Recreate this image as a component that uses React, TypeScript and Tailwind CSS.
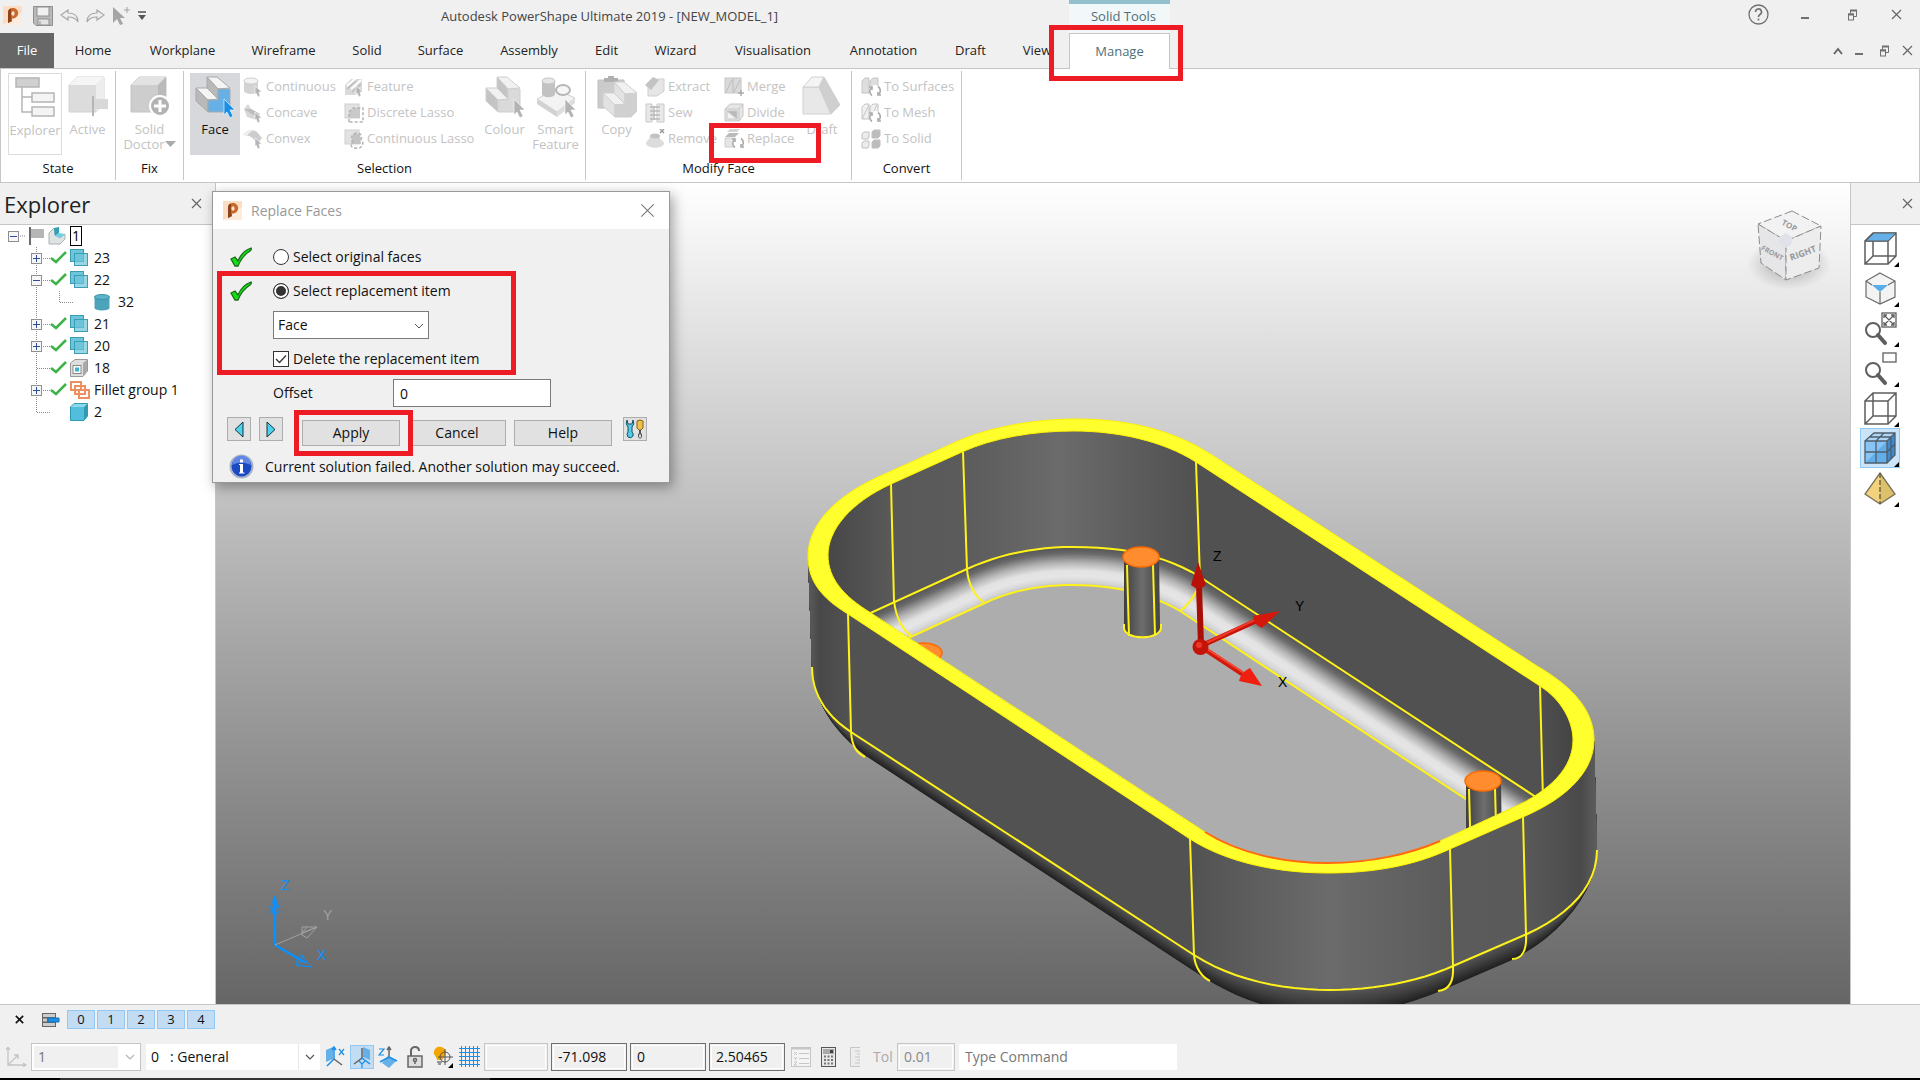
import React from "react";

type Pt = [number, number];

const FONT = "font-['Open_Sans','Noto_Sans',sans-serif]";

/* ---------- ribbon icons ---------- */

const Stair = ({ front = "#dadada", side = "#c4c4c4", top = "#f1f1f1", edge = "#cfcfcf" }) => (
  <g stroke={edge} strokeWidth="1" strokeLinejoin="round">
    <path d="M12 1L22 1L35 12L23 13Z" fill={top} />
    <path d="M12 1L23 13V23L12 13Z" fill={side} />
    <path d="M1 12L12 12L23 23L13 24Z" fill={top} />
    <path d="M1 12L13 24V36L1 25Z" fill={side} />
    <path d="M23 13H35V30L29 36H13V24H23Z" fill={front} />
  </g>
);

const Cursor = ({ x = 29, y = 23, fill = "#b4b4b4" }) => (
  <path
    d={`M${x} ${y}l11 11h-5l3 6l-3 2l-3-6l-3 3z`}
    fill={fill}
    stroke="#fff"
    strokeWidth=".6"
  />
);

const bigIcons: Record<string, React.ReactNode> = {
  explorer: (
    <g fill="none" stroke="#b5b5b5" strokeWidth="1.5">
      <rect x="1" y="1" width="23" height="9" fill="#d0d0d0" />
      <path d="M7 10V35H17M7 20H17" />
      <rect x="17" y="16" width="22" height="9" fill="#f4f4f4" />
      <rect x="17" y="30" width="22" height="9" fill="#f4f4f4" />
    </g>
  ),
  active: (
    <g>
      <path d="M1 9L9 1H36V27L28 36H1Z" fill="#dcdcdc" stroke="#d2d2d2" />
      <path d="M1 9L9 1H36L28 9Z" fill="#f5f5f5" />
      <path d="M28 9L36 1V27L28 36Z" fill="#ededed" />
      <path d="M25 20V40" stroke="#b5b5b5" strokeWidth="2" />
      <rect x="26" y="23" width="14" height="10" fill="#d8d8d8" />
    </g>
  ),
  doctor: (
    <g>
      <path d="M1 9L9 1H36V27L28 36H1Z" fill="#cdcdcd" stroke="#c4c4c4" />
      <path d="M1 9L9 1H36L28 9Z" fill="#e2e2e2" />
      <path d="M28 9L36 1V27L28 36Z" fill="#bababa" />
      <circle cx="30" cy="30" r="10" fill="#b3b3b3" stroke="#fff" strokeWidth="2" />
      <path d="M30 24V36M24 30H36" stroke="#fff" strokeWidth="3" />
    </g>
  ),
  face: (
    <g>
      <Stair front="#66b0e8" side="#b9b9b9" top="#f4f4f4" edge="#a9a9a9" />
      <Cursor fill="#1b8fe6" />
    </g>
  ),
  colour: (
    <g>
      <Stair />
      <Cursor />
    </g>
  ),
  smart: (
    <g>
      <path d="M1 23L20 13L39 22L21 36Z" fill="#f3f3f3" stroke="#d0d0d0" />
      <path d="M1 23L21 36V41L1 28Z" fill="#d2d2d2" />
      <path d="M39 22L21 36V41L39 27Z" fill="#dedede" />
      <path d="M6 5V18a6 3 0 0 0 13 0V5Z" fill="#c2c2c2" />
      <ellipse cx="12.500" cy="5" rx="6.500" ry="3" fill="#e6e6e6" stroke="#c4c4c4" />
      <ellipse cx="27" cy="14" rx="7" ry="5" fill="#f6f6f6" stroke="#b5b5b5" strokeWidth="2" />
      <Cursor />
    </g>
  ),
  copy: (
    <g>
      <path d="M1 4H27V32H1Z" fill="#cbcbcb" stroke="#c0c0c0" />
      <path d="M7 2H11V0H17V2H21V6H7Z" fill="#b0b0b0" />
      <g transform="translate(5 5)">
        <Stair side="#e2e2e2" front="#d0d0d0" />
      </g>
    </g>
  ),
  draft: (
    <g stroke="#d0d0d0" strokeLinejoin="round">
      <path d="M1 38V11H17L29 38Z" fill="#e8e8e8" />
      <path d="M1 11L10 1H22L17 11Z" fill="#f4f4f4" />
      <path d="M17 11L22 1L38 29L29 38Z" fill="#cfcfcf" />
    </g>
  ),
};

const CursorSm = () => <path d="M12 9l7 6h-3l1 4l-2 1l-2-4l-1 2z" fill="#b4b4b4" stroke="#fff" strokeWidth=".6" />;
const Cycle = () => (
  <g>
    <circle cx="14" cy="14" r="6" fill="#fff" />
    <g fill="none" stroke="#ababab" strokeWidth="1.6">
      <path d="M11 18.500a5 5 0 0 1-.5-8M17 9.500a5 5 0 0 1 .5 8" />
      <path d="M8 10h3v3M20 18h-3v-3" />
    </g>
  </g>
);

const smallIcons: Record<string, React.ReactNode> = {
  continuous: (
    <g>
      <path d="M1 4V14a7 3 0 0 0 14 0V4Z" fill="#d3d3d3" />
      <ellipse cx="8" cy="4" rx="7" ry="3" fill="#f3f3f3" stroke="#d0d0d0" />
      <CursorSm />
    </g>
  ),
  concave: (
    <g>
      <path d="M1 6L5 1L8 6L17 11L14 17L4 14Z" fill="#d8d8d8" />
      <path d="M1 6L8 6L17 11L10 12Z" fill="#bdbdbd" />
      <CursorSm />
    </g>
  ),
  convex: (
    <g>
      <path d="M0 6C3 1 10 0 14 3L19 9L13 17C13 10 8 6 0 6Z" fill="#cdcdcd" />
      <path d="M0 6C3 1 7 1 10 2C7 3 5 5 5 6Z" fill="#eee" />
      <CursorSm />
    </g>
  ),
  feature: (
    <g>
      <path d="M1 8L7 2H18V13L13 18H1Z" fill="#d9d9d9" />
      <path d="M3 9L12 1M7 12L17 3" stroke="#fff" strokeWidth="2" />
      <path d="M3 12L12 4M8 15L17 7" stroke="#bcbcbc" strokeWidth="1.500" />
      <CursorSm />
    </g>
  ),
  discrete: (
    <g>
      <rect x="1" y="1" width="14" height="14" fill="#e2e2e2" stroke="#d0d0d0" />
      <path d="M5 15V8L10 5H16V15Z" fill="#c9c9c9" />
      <path d="M5 19V9L9 5H19V19Z" fill="none" stroke="#b3b3b3" strokeWidth="1.500" strokeDasharray="3 2" />
    </g>
  ),
  lasso: (
    <g>
      <rect x="1" y="1" width="14" height="14" fill="#e2e2e2" stroke="#d0d0d0" />
      <path d="M7 15L9 5H16L17 15Z" fill="#c3c3c3" />
      <path d="M10 5C15 2 19 6 17 10C21 14 18 20 13 19C7 20 6 16 9 13C6 10 8 6 10 5Z" fill="none" stroke="#b3b3b3" strokeWidth="1.500" strokeDasharray="3 2" />
    </g>
  ),
  extract: (
    <g>
      <path d="M3 9L13 2H19V14L12 19H3Z" fill="#e6e6e6" stroke="#cfcfcf" />
      <path d="M0 8L8 0L14 3L6 13Z" fill="#c3c3c3" />
    </g>
  ),
  sew: (
    <g fill="none" stroke="#c9c9c9">
      <path d="M1 1H7V19H1ZM12 1H19V19H12Z" fill="#e8e8e8" />
      <path d="M5 4H15M5 8H15M5 12H15M5 16H15M9 3V17" stroke="#b9b9b9" strokeWidth="1.500" />
    </g>
  ),
  remove: (
    <g>
      <path d="M1 15C1 11 4 12 5 7H14C15 12 19 11 19 15C17 20 4 20 1 15Z" fill="#dcdcdc" />
      <ellipse cx="10" cy="7" rx="5" ry="2.500" fill="#c2c2c2" />
      <path d="M15 0L19 4M19 0L15 4" stroke="#9c9c9c" strokeWidth="1.500" />
    </g>
  ),
  merge: (
    <g>
      <rect x="1" y="1" width="16" height="15" fill="#dadada" stroke="#c6c6c6" />
      <path d="M9 1V16M2 15L8 3M10 15L16 3" stroke="#bcbcbc" />
      <path d="M17 13V19M14 16H20" stroke="#aaa" strokeWidth="1.500" />
    </g>
  ),
  divide: (
    <g stroke="#c6c6c6">
      <path d="M1 6L6 1H19V13L15 18H1Z" fill="#e6e6e6" />
      <path d="M1 6H15V18M15 6L19 1" fill="none" />
      <path d="M3 8H13V16Z" fill="#bababa" />
      <path d="M3 8V16H13Z" fill="#f3f3f3" />
    </g>
  ),
  replace: (
    <g>
      <path d="M1 9H12V18H1Z" fill="#e5e5e5" stroke="#d0d0d0" />
      <path d="M1 8L5 4H15L11 8Z" fill="#bababa" />
      <path d="M3 3L6 0H16L13 3Z" fill="#d5d5d5" />
      <Cycle />
    </g>
  ),
  surfaces: (
    <g>
      <path d="M1 4L4 1H8V16H1ZM9 4L12 1H17V16H9Z" fill="#dedede" stroke="#c4c4c4" />
      <Cycle />
    </g>
  ),
  mesh: (
    <g>
      <path d="M1 4L4 1H8V16H1ZM9 4L12 1H17V16H9Z" fill="#f0f0f0" stroke="#c4c4c4" />
      <path d="M1 16L8 2M9 16L16 2" stroke="#c4c4c4" />
      <Cycle />
    </g>
  ),
  solid: (
    <g stroke="#c0c0c0">
      <path d="M1 5L3 3H8V8L7 10H1ZM1 14L3 12H8V17L7 19H1Z" fill="#ececec" />
      <path d="M11 3L13 1H19V7L17 9H11ZM11 13L13 11H19V17L17 19H11Z" fill="#bcbcbc" />
    </g>
  ),
};

const BigButton = ({ icon, label, className = "", active = false }: { icon: string; label: string; className?: string; active?: boolean }) => (
  <button
    type="button"
    className={`flex h-[82px] flex-col items-center pt-[3px] text-[13px] leading-[15px] ${active ? "bg-[#d6d8db] text-[#111]" : "text-[#c3c3c3]"} ${className}`}
  >
    <svg width="40" height="42" viewBox="0 0 40 42" className="shrink-0">{bigIcons[icon]}</svg>
    <span className="mt-1 whitespace-pre-line">{label}</span>
  </button>
);

const SmallColumn = ({ items, className = "" }: { items: [string, string][]; className?: string }) => (
  <div className={`flex flex-col pt-px ${className}`}>
    {items.map(([icon, label]) => (
      <button key={label} type="button" className="flex h-[26px] items-center gap-[3px] text-[13px] whitespace-nowrap text-[#c3c3c3]">
        <svg width="20" height="20" viewBox="0 0 20 20" className="shrink-0">{smallIcons[icon]}</svg>
        {label}
      </button>
    ))}
  </div>
);

const Group = ({ title, className = "", inner = "", children }: { title: string; className?: string; inner?: string; children: React.ReactNode }) => (
  <section className={`relative my-[2px] flex shrink-0 flex-col border-r border-[#c6c6c6] ${className}`}>
    <div className={`mt-[2px] flex h-[82px] ${inner}`}>{children}</div>
    <h2 className="mt-[3px] text-center text-[13px] leading-5 text-[#111]">{title}</h2>
  </section>
);

/* ---------- title bar ---------- */

const PLogo = ({ size = 19 }: { size?: number }) => (
  <svg width={size} height={size} viewBox="0 0 19 19">
    <rect width="19" height="19" fill="#fbdcc4" />
    <path d="M0 19L19 6V19Z" fill="#fdebdd" />
    <path d="M5 17V7C5 3 8 2 10 2C17 2 17 13 9 12.500V15Z" fill="#c8682a" />
    <path d="M5 17V7C5 4 6 3 8 2.500V13L9 15Z" fill="#8f4417" />
    <ellipse cx="10" cy="7.500" rx="1.600" ry="2.200" fill="#fbe0cb" />
  </svg>
);

const Close = ({ size = 11, w = 1.2, color = "#666" }) => (
  <svg width={size} height={size} viewBox="0 0 11 11">
    <path d="M1 1L10 10M10 1L1 10" stroke={color} strokeWidth={w} />
  </svg>
);
const Minimise = () => (
  <svg width="10" height="11" viewBox="0 0 10 11">
    <path d="M1 9H9" stroke="#707070" strokeWidth="2" />
  </svg>
);
const Restore = () => (
  <svg width="11" height="12" viewBox="0 0 11 12" fill="none" stroke="#707070">
    <path d="M3.500 4.500V1.500H9.500V7.500H7" />
    <path d="M3 1.500H10M1 5.500H7" strokeWidth="2" />
    <rect x="1.500" y="5" width="5" height="6" />
  </svg>
);

const TitleBar = () => (
  <header className="flex h-[33px] items-start pl-[3px]">
    <div className="flex h-[31px] w-[435px] shrink-0 items-center">
      <PLogo />
      <button type="button" aria-label="Save" className="ml-[11px]">
        <svg width="20" height="20" viewBox="0 0 20 20" fill="#b9b9b9" stroke="#8f8f8f">
          <path d="M.5.5H19.500V19.500H3L.5 17Z" />
          <rect x="4" y="1" width="12" height="9" fill="#f0f0f0" />
          <rect x="5" y="13" width="11" height="6" fill="#e3e3e3" />
          <path d="M7 15V19" />
        </svg>
      </button>
      <button type="button" aria-label="Undo" className="ml-[7px]">
        <svg width="20" height="14" viewBox="0 0 20 14" fill="none" stroke="#a9a9a9" strokeWidth="1.200">
          <path d="M1 6L8 1V4C14 4 18 7 18 13C16 9 13 8 8 8V11Z" />
        </svg>
      </button>
      <button type="button" aria-label="Redo" className="ml-[5px]">
        <svg width="20" height="14" viewBox="0 0 20 14" fill="none" stroke="#a9a9a9" strokeWidth="1.200">
          <path d="M19 6L12 1V4C6 4 2 7 2 13C4 9 7 8 12 8V11Z" />
        </svg>
      </button>
      <button type="button" aria-label="Select" className="ml-[8px]">
        <svg width="17" height="20" viewBox="0 0 17 20" fill="#a5a5a5">
          <path d="M0 1L12 12H7L10 18L7 19L4 13L0 17Z" />
          <path d="M14 1V7M11 4H17" stroke="#a5a5a5" />
        </svg>
      </button>
      <button type="button" aria-label="Customise" className="ml-[8px]">
        <svg width="8" height="9" viewBox="0 0 8 9">
          <path d="M0 1H8" stroke="#555" strokeWidth="1.500" />
          <path d="M0 4H8L4 9Z" fill="#555" />
        </svg>
      </button>
    </div>
    <h1 className="w-[631px] shrink-0 pl-[3px] text-[13px] leading-8 text-[#444]">Autodesk PowerShape Ultimate 2019 - [NEW_MODEL_1]</h1>
    <div className="h-[33px] w-[101px] shrink-0 border-t-4 border-[#93c0cd] bg-[#f2f7fa] pl-2 text-center text-[13px] leading-6 text-[#4d7078]">
      Solid Tools
    </div>
    <div className="ml-auto flex h-[29px] items-center pr-[18px]">
      <button type="button" aria-label="Help" className="mr-[31px]">
        <svg width="21" height="21" viewBox="0 0 21 21" fill="none" stroke="#707070" strokeWidth="1.300">
          <circle cx="10.500" cy="10.500" r="9.500" />
          <path d="M7.500 8a3 3 0 1 1 4.500 2.500q-1.500 1-1.500 2.500M10.500 14.500V16.500" strokeWidth="1.600" />
        </svg>
      </button>
      <button type="button" aria-label="Minimise" className="mr-[37px]"><Minimise /></button>
      <button type="button" aria-label="Restore" className="mr-[33px]"><Restore /></button>
      <button type="button" aria-label="Close"><Close /></button>
    </div>
  </header>
);

const tabs: [string, string][] = [
  ["Home", "w-[78px]"],
  ["Workplane", "w-[101px]"],
  ["Wireframe", "w-[101px]"],
  ["Solid", "w-[66px]"],
  ["Surface", "w-[81px]"],
  ["Assembly", "w-[96px]"],
  ["Edit", "w-[59px]"],
  ["Wizard", "w-[79px]"],
  ["Visualisation", "w-[116px]"],
  ["Annotation", "w-[105px]"],
  ["Draft", "w-[69px]"],
  ["View", "w-[64px]"],
];

const TabRow = () => (
  <nav className="flex h-[36px] items-stretch border-b border-[#c6c6c6] text-[13px] text-[#222]">
    <button type="button" className="w-[54px] shrink-0 bg-[#666] pt-px text-white">File</button>
    {tabs.map(([label, width]) => (
      <button key={label} type="button" className={`shrink-0 pt-px ${width}`}>{label}</button>
    ))}
    <button type="button" className="-mb-px w-[101px] shrink-0 border border-b-0 border-[#c6c6c6] bg-white text-[#4d7078]">Manage</button>
    <div className="ml-auto flex items-center pr-[7px]">
      <button type="button" aria-label="Collapse ribbon" className="mr-[11px]">
        <svg width="10" height="8" viewBox="0 0 10 8"><path d="M1 7L5 2L9 7" fill="none" stroke="#666" strokeWidth="2" /></svg>
      </button>
      <button type="button" aria-label="Minimise document" className="mr-[15px]"><Minimise /></button>
      <button type="button" aria-label="Restore document" className="mr-[12px]"><Restore /></button>
      <button type="button" aria-label="Close document"><Close /></button>
    </div>
  </nav>
);

const Ribbon = () => (
  <div className="flex h-[114px] border border-t-0 border-[#c6c6c6] bg-white">
    <Group title="State" className="w-[115px]" inner="pl-[7px]">
      <BigButton icon="explorer" label="Explorer" className="w-[54px] border border-[#dcdcdc] pt-[2px]" />
      <BigButton icon="active" label="Active" className="w-[51px]" />
    </Group>
    <Group title="Fix" className="w-[68px]">
      <button type="button" className="flex h-[82px] w-full flex-col items-center pt-[3px] text-[13px] leading-[15px] text-[#c3c3c3]">
        <svg width="40" height="42" viewBox="0 0 40 42" className="shrink-0">{bigIcons.doctor}</svg>
        <span className="mt-1">Solid</span>
        <span className="flex items-center">
          Doctor
          <svg width="11" height="7" viewBox="0 0 11 7"><path d="M0 0H11L5.500 6Z" fill="#aaa" /></svg>
        </span>
      </button>
    </Group>
    <Group title="Selection" className="w-[402px]" inner="pl-[6px]">
      <BigButton icon="face" label="Face" active className="w-[50px]" />
      <SmallColumn className="ml-[3px] w-[101px]" items={[["continuous", "Continuous"], ["concave", "Concave"], ["convex", "Convex"]]} />
      <SmallColumn className="w-[135px]" items={[["feature", "Feature"], ["discrete", "Discrete Lasso"], ["lasso", "Continuous Lasso"]]} />
      <BigButton icon="colour" label="Colour" className="w-[51px]" />
      <BigButton icon="smart" label={"Smart\nFeature"} className="w-[51px]" />
    </Group>
    <Group title="Modify Face" className="w-[266px]" inner="pl-[5px]">
      <BigButton icon="copy" label="Copy" className="w-[51px]" />
      <SmallColumn className="ml-[3px] w-[79px]" items={[["extract", "Extract"], ["sew", "Sew"], ["remove", "Remove"]]} />
      <SmallColumn className="w-[74px]" items={[["merge", "Merge"], ["divide", "Divide"], ["replace", "Replace"]]} />
      <BigButton icon="draft" label="Draft" className="w-[48px]" />
      <div className="pointer-events-none absolute top-[52px] left-[123px] h-[40px] w-[112px] border-[5px] border-[#ed1c24]" />
    </Group>
    <Group title="Convert" className="w-[110px]" inner="pl-[9px]">
      <SmallColumn items={[["surfaces", "To Surfaces"], ["mesh", "To Mesh"], ["solid", "To Solid"]]} />
    </Group>
  </div>
);

/* ---------- explorer ---------- */

const Overlap = () => (
  <svg width="18" height="18" viewBox="0 0 18 18" fill="#6cc5da" stroke="#3a9db4">
    <rect x=".5" y=".5" width="13" height="12" />
    <rect x="4.500" y="4.500" width="13" height="12" fillOpacity=".7" />
  </svg>
);
const treeIcons: Record<string, React.ReactNode> = {
  overlap: <Overlap />,
  shell: (
    <svg width="18" height="18" viewBox="0 0 18 18">
      <path d="M.5 4L5 .5H17.500V12L13 17.500H.5Z" fill="#dedede" stroke="#9a9a9a" />
      <path d="M13 4L17 1V12L13 17Z" fill="#a9a9a9" />
      <rect x="3" y="6.500" width="8" height="8" fill="#fff" stroke="#888" />
      <rect x="5" y="8.500" width="4" height="4" fill="#3bb4cf" />
    </svg>
  ),
  fillet: (
    <svg width="20" height="19" viewBox="0 0 20 19" fill="none" stroke="#ee8f5f" strokeWidth="2">
      <rect x="1" y="1" width="10" height="8" />
      <rect x="5" y="5" width="10" height="8" />
      <rect x="9" y="9" width="10" height="8" />
    </svg>
  ),
  cube: (
    <svg width="18" height="18" viewBox="0 0 18 18">
      <path d="M.5 4L4 .5H17.500V13L14 17.500H.5Z" fill="#52bedb" stroke="#2f9ab5" />
      <path d="M14 4L17 1V13L14 17Z" fill="#3299b3" />
      <path d="M1 4L4 1H17L14 4Z" fill="#8ad9ea" />
    </svg>
  ),
  cylinder: (
    <svg width="16" height="17" viewBox="0 0 16 17">
      <path d="M.5 3V14a7.500 2.500 0 0 0 15 0V3Z" fill="#4da3b9" />
      <ellipse cx="8" cy="3" rx="7.500" ry="2.500" fill="#5bb4ca" stroke="#3c94ab" />
    </svg>
  ),
};

const Expander = ({ open = false }) => (
  <svg width="11" height="11" viewBox="0 0 11 11" className="shrink-0">
    <rect x=".5" y=".5" width="10" height="10" fill="#f6f6f6" stroke="#8f8f8f" />
    <path d={open ? "M2 5.500H9" : "M2 5.500H9M5.500 2V9"} stroke="#2b4d9c" />
  </svg>
);

type Node = { label: string; icon: string; expander?: "open" | "closed"; check?: boolean; child?: boolean; last?: boolean };
const nodes: Node[] = [
  { label: "23", icon: "overlap", expander: "closed", check: true },
  { label: "22", icon: "overlap", expander: "open", check: true },
  { label: "32", icon: "cylinder", child: true },
  { label: "21", icon: "overlap", expander: "closed", check: true },
  { label: "20", icon: "overlap", expander: "closed", check: true },
  { label: "18", icon: "shell", check: true },
  { label: "Fillet group 1", icon: "fillet", expander: "closed", check: true },
  { label: "2", icon: "cube", last: true },
];

const TreeRow = ({ node }: { node: Node }) => (
  <li className="flex h-[22px] items-center text-sm text-[#111]">
    <svg width={node.child ? 94 : 50} height="22" viewBox={node.child ? "0 0 94 22" : "0 0 50 22"} className="shrink-0" fill="none">
      <g stroke="#8a8a8a" strokeDasharray="1 1">
        <path d={node.last ? "M36.500 0V11" : "M36.500 0V22"} />
        <path d={node.child ? "M59.500 0V11.500H73" : "M37 11.500H50"} />
      </g>
      {node.expander && (
        <g transform="translate(31 6)">
          <rect x=".5" y=".5" width="10" height="10" fill="#f6f6f6" stroke="#8f8f8f" />
          <path d={node.expander === "open" ? "M2 5.500H9" : "M2 5.500H9M5.500 2V9"} stroke="#2b4d9c" />
        </g>
      )}
    </svg>
    {!node.child && (
      <svg width="20" height="16" viewBox="0 0 20 16" className="shrink-0">
        {node.check && <path d="M1 8L6 12L16 2" fill="none" stroke="#3db34a" strokeWidth="2.500" />}
      </svg>
    )}
    <span className="flex w-[24px] shrink-0">{treeIcons[node.icon]}</span>
    {node.label}
  </li>
);

const Explorer = () => (
  <aside className="flex w-[216px] shrink-0 flex-col border-r border-[#c6c6c6] bg-white">
    <div className="flex h-[42px] items-center justify-between border-b border-[#c6c6c6] bg-[#f0f0f0] pr-[13px] pl-[4px]">
      <h2 className="text-[22px] leading-8 text-[#222]">Explorer</h2>
      <button type="button" aria-label="Close explorer"><Close /></button>
    </div>
    <ul>
      <li className="flex h-[22px] items-center pl-[8px] text-sm">
        <Expander open />
        <svg width="7" height="2" className="shrink-0"><path d="M1 1H7" stroke="#8a8a8a" strokeDasharray="1 1" /></svg>
        <svg width="18" height="18" viewBox="0 0 18 18" className="ml-[3px] shrink-0">
          <path d="M1 0V18" stroke="#6b6b6b" strokeWidth="2" />
          <rect x="2" y="2" width="13" height="9" fill="#b5b5b5" />
        </svg>
        <svg width="18" height="18" viewBox="0 0 18 18" className="ml-px shrink-0">
          <path d="M1 6L6 1L7 8L12 11L17 7V12L12 17H1Z" fill="#dfe3e4" stroke="#a9b2b4" />
          <path d="M6 1L11 0V6L7 9Z" fill="#2f9fb8" />
          <path d="M7 9L11 6L17 7L12 11Z" fill="#6fd0e4" />
        </svg>
        <span className="ml-[4px] border border-black px-px leading-[18px]">1</span>
      </li>
      {nodes.map((n) => <TreeRow key={n.label} node={n} />)}
    </ul>
  </aside>
);

/* ---------- 3D model ---------- */

const cubic = (a: Pt, b: Pt, c: Pt, d: Pt): Pt[] =>
  Array.from({ length: 13 }, (_, i) => {
    const t = i / 12;
    const u = 1 - t;
    return [0, 1].map((k) => u * u * u * a[k] + 3 * u * u * t * b[k] + 3 * u * t * t * c[k] + t * t * t * d[k]) as Pt;
  });
const mix = (a: Pt[], b: Pt[], t: number): Pt[] => a.map((p, i) => [p[0] + (b[i][0] - p[0]) * t, p[1] + (b[i][1] - p[1]) * t]);
const toPath = (pts: Pt[]) => "M" + pts.map((p) => `${p[0].toFixed(1)} ${p[1].toFixed(1)}`).join("L");
const shade = (stops: [number, number][], t: number) => {
  let i = 0;
  while (i < stops.length - 2 && t > stops[i + 1][0]) i++;
  const [t0, v0] = stops[i];
  const [t1, v1] = stops[i + 1];
  const v = Math.round(v0 + ((v1 - v0) * (t - t0)) / (t1 - t0));
  return `rgb(${v},${v},${v})`;
};

// inner fillet: upper and lower boundary, left to right
const filletTop: Pt[] = [
  [820, 636],
  ...cubic([967, 569], [1000, 554], [1035, 547], [1073, 547]),
  ...cubic([1073, 547], [1125, 547], [1167, 556], [1200, 577]),
  [1545, 803],
];
const filletLow: Pt[] = [
  [838, 670],
  ...cubic([985, 603], [1010, 591], [1040, 585], [1073, 585]),
  ...cubic([1073, 585], [1115, 585], [1151, 594], [1180, 611]),
  [1525, 838],
];
// outer fillet below the side wall
const wallLow: Pt[] = [
  ...cubic([812, 667], [812, 692], [824, 714], [851, 732]),
  ...cubic([1194, 955], [1233, 980], [1283, 990], [1330, 990]),
  ...cubic([1330, 990], [1373, 990], [1418, 982], [1453, 966]),
  ...cubic([1527, 934], [1570, 914], [1597, 886], [1597, 850]),
];
const baseLow: Pt[] = [
  ...cubic([812, 667], [814, 700], [832, 731], [866, 756]),
  ...cubic([1206, 979], [1245, 1003], [1290, 1016], [1335, 1016]),
  ...cubic([1335, 1016], [1375, 1014], [1408, 1004], [1438, 992]),
  ...cubic([1512, 960], [1562, 935], [1597, 890], [1597, 850]),
];

const OUTER =
  "M848 614L1190 839C1226 862 1276 873 1328 873C1378 873 1418 864 1450 849L1523 817C1572 796 1594 768 1594 740C1594 712 1575 688 1537 666L1212 455C1175 431 1130 419 1076 419C1030 419 985 429 958 441L878 477C830 499 808 528 808 556C808 580 820 597 848 614Z";
const INNER =
  "M871 613L1205 832C1238 853 1283 863 1328 863C1370 863 1410 854 1440 841L1512 808C1550 791 1573 768 1573 740C1573 722 1562 700 1540 686L1196 462C1163 441 1118 431 1073 431C1033 431 993 438 962 452L891 484C850 503 828 530 828 555C828 578 843 596 871 613Z";
const steps = Array.from({ length: 33 }, (_, i) => i / 32);

const Pin = ({ x, y, h }: { x: number; y: number; h: number }) => (
  <g>
    <path d={`M${x - 17} ${y}V${y + h}a18 9 0 0 0 36 0L${x + 18} ${y}Z`} fill="url(#pin)" />
    <path d={`M${x - 17} ${y + h - 4}v4a18 9 0 0 0 37 0v-4M${x - 14} ${y + 8}l2 ${h}M${x + 12} ${y + 8}l2 ${h}`} fill="none" stroke="#fff21a" strokeWidth="2" />
    <ellipse cx={x} cy={y} rx="18" ry="10" fill="#ff8c2e" stroke="#ff6a00" strokeWidth="1.500" />
  </g>
);

const Model = () => (
  <svg viewBox="216 183 1634 821" preserveAspectRatio="xMidYMid slice" className="absolute inset-0 h-full w-full" role="img" aria-label="Model view">
    <defs>
      <linearGradient id="wall" gradientUnits="userSpaceOnUse" x1="808" x2="1597" y1="0" y2="0">
        <stop offset="0" stopColor="#5c5c5c" />
        <stop offset=".015" stopColor="#484848" />
        <stop offset=".052" stopColor="#525252" />
        <stop offset=".485" stopColor="#525252" />
        <stop offset=".66" stopColor="#6b6b6b" />
        <stop offset=".815" stopColor="#5b5b5b" />
        <stop offset=".905" stopColor="#5a5a5a" />
        <stop offset=".98" stopColor="#4a4a4a" />
        <stop offset="1" stopColor="#5e5e5e" />
      </linearGradient>
      <linearGradient id="inside" gradientUnits="userSpaceOnUse" x1="829" x2="1573" y1="0" y2="0">
        <stop offset="0" stopColor="#474747" />
        <stop offset=".083" stopColor="#595959" />
        <stop offset=".18" stopColor="#5b5b5b" />
        <stop offset=".31" stopColor="#6b6b6b" />
        <stop offset=".49" stopColor="#515151" />
        <stop offset=".95" stopColor="#515151" />
        <stop offset="1" stopColor="#444" />
      </linearGradient>
      <linearGradient id="pin">
        <stop offset="0" stopColor="#3e3e3e" />
        <stop offset=".5" stopColor="#6e6e6e" />
        <stop offset="1" stopColor="#424242" />
      </linearGradient>
      <radialGradient id="cubeShadow">
        <stop offset="0" stopColor="#777" stopOpacity=".7" />
        <stop offset="1" stopColor="#999" stopOpacity="0" />
      </radialGradient>
      <clipPath id="inner"><path d={INNER} /></clipPath>
    </defs>

    {/* outer body, painted from the base up */}
    {steps.map((t) => (
      <path key={t} d={`${toPath(mix(baseLow, wallLow, t))}L1594 740L808 556Z`} fill={shade([[0, 34], [0.5, 62], [1, 88]], t)} />
    ))}
    <path d={`${toPath(wallLow)}L1594 740L1400 640L808 556Z`} fill="url(#wall)" />
    <g fill="none" stroke="#fff21a" strokeWidth="2">
      <path d={toPath(wallLow)} />
      <path d="M848 614L851 732C852 747 857 753 865 757" />
      <path d="M1190 839L1194 955C1195 968 1202 977 1210 981" />
      <path d="M1450 849L1453 966C1454 982 1449 990 1438 991" />
      <path d="M1523 817L1526 934C1527 949 1523 959 1512 959" />
    </g>
    <path d={OUTER} fill="#ffff2e" stroke="#fff200" strokeWidth="1" />

    <g clipPath="url(#inner)">
      <rect x="800" y="400" width="800" height="480" fill="url(#inside)" />
      {steps.map((t) => (
        <path
          key={t}
          d={`${toPath(mix(filletTop, filletLow, t))}L1530 900H800Z`}
          fill={shade([[0, 86], [0.15, 105], [0.4, 180], [0.6, 226], [0.75, 230], [0.9, 212], [1, 190]], t)}
        />
      ))}
      <path d={`${toPath(filletLow)}L1530 900H800Z`} fill="#adadad" />
      <g fill="none" stroke="#fff21a" strokeWidth="2">
        <path d={toPath(filletTop)} />
        <path d={toPath(filletLow)} />
        <path d="M891 484L894 601C896 618 903 631 912 636" />
        <path d="M963 452L967 569C968 584 975 597 985 603" />
        <path d="M1196 462L1200 577C1199 590 1191 603 1180 611" />
        <path d="M1540 686L1543 800" />
      </g>
      <Pin x={1141} y={557} h={71} />
      <Pin x={1483} y={781} h={71} />
      <ellipse cx="924" cy="653" rx="18" ry="10" fill="#ff8c2e" stroke="#ff6a00" strokeWidth="1.500" />
    </g>
    <path d={INNER} fill="none" stroke="#fff200" />
    <path d="M1205 832C1238 853 1283 863 1328 863C1370 863 1410 854 1440 841" fill="none" stroke="#ff6a10" strokeWidth="2" />

    {/* workplane triad */}
    <g strokeLinecap="round">
      <path d="M1201 645L1199 586" stroke="#a80f06" strokeWidth="6" />
      <path d="M1198 562L1206 585Q1199 592 1191 585Z" fill="#b81208" />
      <path d="M1203 645L1258 620" stroke="#c81408" strokeWidth="5" />
      <path d="M1204 644L1257 619" stroke="#f03a28" strokeWidth="2" />
      <path d="M1280 611L1253 616Q1254 625 1262 628Z" fill="#d6180c" />
      <path d="M1203 648L1244 675" stroke="#d4180a" strokeWidth="5" />
      <path d="M1204 647L1244 673" stroke="#f84430" strokeWidth="2" />
      <path d="M1262 686L1250 668Q1241 672 1239 681Z" fill="#f02010" />
      <circle cx="1200.500" cy="647" r="8" fill="#c4140a" />
      <circle cx="1199" cy="645" r="3" fill="#e8382a" />
    </g>
    <g fontFamily="Liberation Sans, sans-serif" fontSize="14" fill="#000">
      <text x="1213" y="561">Z</text>
      <text x="1295" y="611">Y</text>
      <text x="1278" y="687">X</text>
    </g>

    {/* screen axes */}
    <g fill="none" stroke="#0a91ff">
      <path d="M275 945V900M275 945L306 963" strokeWidth="2.500" />
      <path d="M275 896L269 911Q275 916 280 911ZM275 896L272 913M275 896L278 913M311 967L302 955Q296 957 296 965ZM303 956L298 966" />
      <path d="M275 945L317 927M317 927L302 927V935L307 938ZM317 927L302 933L307 927" stroke="#a2a2a2" />
    </g>
    <g fontFamily="Liberation Sans, sans-serif" fontSize="14" fill="#0a91ff">
      <text x="281" y="890">Z</text>
      <text x="317" y="960">X</text>
      <text x="323" y="920" fill="#a2a2a2">Y</text>
    </g>

    {/* view cube */}
    <ellipse cx="1789" cy="264" rx="42" ry="26" fill="url(#cubeShadow)" />
    <g stroke="#8c8c8c" strokeDasharray="8 3" strokeLinejoin="round">
      <path d="M1792 211L1821 226L1786 241L1758 224Z" fill="#f2f2f3" />
      <path d="M1758 224L1786 241V280L1761 263Z" fill="#e6e6e8" />
      <path d="M1786 241L1821 226L1819 268L1786 280Z" fill="#ededee" />
    </g>
    <path d="M1779 237L1786 233L1792 237V244L1786 248L1779 244Z" fill="#dfe2e8" />
    <g fontFamily="Open Sans, sans-serif" fontWeight="700" fill="#96999f" textAnchor="middle">
      <text fontSize="8" transform="translate(1788 228) rotate(28)">TOP</text>
      <text fontSize="7" transform="translate(1771 255) rotate(28)">FRONT</text>
      <text fontSize="9" transform="translate(1804 256) rotate(-20)">RIGHT</text>
    </g>
  </svg>
);

/* ---------- dialog ---------- */

const GreenTick = () => (
  <svg width="22" height="20" viewBox="0 0 22 20" className="shrink-0">
    <path d="M1 12L5 10L8 14Q12 4 21 1Q22 2 20 4Q12 9 8 19H5Z" fill="#12e012" stroke="#1c6b1c" strokeWidth="1.300" />
  </svg>
);

const dialogButton = "h-[26px] w-[98px] border border-[#adadad] bg-[#e1e1e1] text-center";
const squareButton = "flex h-6 w-6 items-center justify-center border border-[#adadad] bg-[#e1e1e1]";

const ReplaceFaces = () => (
  <div
    role="dialog"
    aria-label="Replace Faces"
    className="absolute top-[8px] left-[212px] w-[458px] border border-[#999] bg-[#f0f0f0] text-sm text-[#111] shadow-[3px_4px_12px_rgba(0,0,0,0.35)]"
  >
    <div className="flex h-[37px] items-center bg-white pr-[14px] pl-[10px] text-[#999]">
      <PLogo />
      <span className="ml-[9px]">Replace Faces</span>
      <button type="button" aria-label="Close dialog" className="ml-auto"><Close size={15} w={0.8} color="#777" /></button>
    </div>
    <form className="pt-[11px] pl-[60px]" onSubmit={(e) => e.preventDefault()}>
      <div className="-ml-[43px] flex h-[34px] items-center">
        <span className="w-[43px]"><GreenTick /></span>
        <label className="flex items-center gap-1">
          <input type="radio" name="pick" className="h-4 w-4 appearance-none rounded-full border border-[#333] bg-white" />
          Select original faces
        </label>
      </div>
      <div className="-ml-[43px] flex h-[34px] items-center">
        <span className="w-[43px]"><GreenTick /></span>
        <label className="flex items-center gap-1">
          <input
            type="radio"
            name="pick"
            defaultChecked
            className="h-4 w-4 appearance-none rounded-full border border-[#333] bg-white checked:bg-[#333] checked:shadow-[inset_0_0_0_2px_#fff]"
          />
          Select replacement item
        </label>
      </div>
      <div className="relative mt-[3px] w-[156px]">
        <select aria-label="Replacement type" className="h-[28px] w-full appearance-none border border-[#7a7a7a] bg-white px-1">
          <option>Face</option>
        </select>
        <svg width="10" height="6" viewBox="0 0 10 6" className="pointer-events-none absolute top-[12px] right-[5px]">
          <path d="M1 1L5 5L9 1" fill="none" stroke="#555" />
        </svg>
      </div>
      <label className="mt-[3px] flex h-[34px] items-center gap-1">
        <span className="relative flex">
          <input type="checkbox" defaultChecked className="h-4 w-4 appearance-none border border-[#333] bg-white" />
          <svg width="16" height="16" viewBox="0 0 16 16" className="pointer-events-none absolute inset-0">
            <path d="M3 8L6.500 11.500L13 4.500" fill="none" stroke="#333" strokeWidth="1.300" />
          </svg>
        </span>
        Delete the replacement item
      </label>
      <div className="mt-[3px] flex items-center">
        <label htmlFor="offset" className="w-[120px]">Offset</label>
        <input id="offset" defaultValue="0" className="h-[28px] w-[158px] border border-[#7a7a7a] bg-white px-[6px]" />
      </div>
      <div className="mt-[10px] -ml-[46px] flex h-[30px]">
        <button type="button" aria-label="Previous solution" className={squareButton}>
          <svg width="10" height="17" viewBox="0 0 10 17"><path d="M9 1V16L1 8.500Z" fill="#4fd0ee" stroke="#14333c" /></svg>
        </button>
        <button type="button" aria-label="Next solution" className={`ml-2 ${squareButton}`}>
          <svg width="10" height="17" viewBox="0 0 10 17"><path d="M1 1V16L9 8.500Z" fill="#4fd0ee" stroke="#14333c" /></svg>
        </button>
        <div className="mt-[3px] ml-[19px] flex gap-2">
          <button type="submit" className={dialogButton}>Apply</button>
          <button type="button" className={dialogButton}>Cancel</button>
          <button type="button" className={dialogButton}>Help</button>
        </div>
        <button type="button" aria-label="Options" className={`ml-[11px] ${squareButton}`}>
          <svg width="20" height="20" viewBox="0 0 20 20">
            <path d="M2 1Q0 5 3 8V13Q1 15 3 18Q6 20 8 17Q9 15 7 13V8Q10 5 8 1L7 5H3Z" fill="#53cbe8" stroke="#155066" />
            <path d="M12 2Q15 0 18 2V9L16 11H14L12 9Z" fill="#f0c14a" stroke="#80611a" />
            <path d="M15 11V15" stroke="#555" strokeWidth="2" />
            <path d="M13.500 15H16.500V18L15 19.500L13.500 18Z" fill="#ddd" stroke="#555" />
          </svg>
        </button>
      </div>
      <div className="mt-[4px] -ml-[44px] flex h-[31px] items-center gap-[11px]">
        <svg width="25" height="25" viewBox="0 0 25 25" className="shrink-0">
          <circle cx="12.500" cy="12.500" r="11" fill="#1b49c4" stroke="#a7b1c8" strokeWidth="2" />
          <path d="M3 11a9.500 9.500 0 0 1 19 0Q12 6 3 11Z" fill="#5f86e2" />
          <path d="M12.500 5.500V8.500M12.500 10V19" stroke="#fff" strokeWidth="3" />
          <path d="M10 10.500H13M10 19H15.500" stroke="#fff" />
        </svg>
        <output>Current solution failed. Another solution may succeed.</output>
      </div>
    </form>
    <div className="pointer-events-none absolute top-[79px] left-[4px] h-[104px] w-[299px] border-[5px] border-[#ed1c24]" />
    <div className="pointer-events-none absolute top-[218px] left-[81px] h-[46px] w-[119px] border-[5px] border-[#ed1c24]" />
  </div>
);

/* ---------- view toolbar ---------- */

const wireBox = (
  <g fill="none" stroke="#5e5e5e" strokeWidth="1.500">
    <path d="M1 9H24V32H1ZM1 9L9 1H32V24L24 32M24 9L32 1M9 1V24H32M9 24L1 32" />
  </g>
);
const glass = (
  <g fill="none" stroke="#5e5e5e">
    <circle cx="9" cy="18" r="7" strokeWidth="2" />
    <path d="M14 23L21 31" strokeWidth="4" strokeLinecap="round" />
  </g>
);

const viewTools: { name: string; active?: boolean; art: React.ReactNode }[] = [
  { name: "View from top", art: <>{wireBox}<path d="M2 9L10 1H32L24 9Z" fill="#66b0e8" stroke="#5e5e5e" /></> },
  {
    name: "Isometric view",
    art: (
      <g>
        <path d="M16 1L31 9V25L16 32L2 25V9Z" fill="#f3f3f3" stroke="#6a6a6a" strokeWidth="1.200" />
        <path d="M8 13H24L16 20Z" fill="#5aaceb" />
        <path d="M2 9L8 13M31 9L24 13M16 20V32" stroke="#6a6a6a" strokeWidth="1.200" />
      </g>
    ),
  },
  {
    name: "Zoom full",
    art: (
      <g>
        {glass}
        <g fill="none" stroke="#5e5e5e" strokeWidth="1.300">
          <rect x="18" y="1" width="14" height="14" />
          <path d="M20 3L30 13M30 3L20 13M20 6V3H23M27 3H30V6M20 10V13H23M27 13H30V10" />
        </g>
      </g>
    ),
  },
  { name: "Zoom to box", art: <>{glass}<rect x="19" y="1" width="13" height="9" fill="#fff" stroke="#5e5e5e" strokeWidth="1.300" /></> },
  { name: "Wireframe view", art: wireBox },
  {
    name: "Shaded wireframe",
    active: true,
    art: (
      <g>
        <path d="M1 9H23V31H1Z" fill="#62aee8" />
        <path d="M1 9H23L1 31Z" fill="#86c5f6" />
        <path d="M1 9L10 1H31L23 9Z" fill="#add6f7" />
        <path d="M23 9L31 1V23L23 31Z" fill="#3d8bcd" />
        <path d="M1 9H23V31H1ZM1 9L10 1H31V23L23 31M23 9L31 1M12 9V31M1 20H23L31 12M12 9L20 1M6 5H27V27" fill="none" stroke="#4f5e6b" strokeWidth="1.300" />
      </g>
    ),
  },
  {
    name: "Shading options",
    art: (
      <g>
        <path d="M16 1L31 22L16 32L1 22Z" fill="#f2d37c" />
        <path d="M16 1L31 22L16 32Z" fill="#dcc06a" />
        <path d="M16 1L31 22L16 32L1 22Z" fill="none" stroke="#7a705a" strokeWidth="1.300" />
        <path d="M16 1V32" stroke="#5f553f" strokeDasharray="5 2" strokeWidth="1.300" />
      </g>
    ),
  },
];

const ViewBar = () => (
  <aside className="flex w-[70px] shrink-0 flex-col border-l border-[#c6c6c6] bg-white">
    <div className="flex h-[42px] items-center justify-end border-b border-[#c6c6c6] bg-[#f0f0f0] pr-[7px]">
      <button type="button" aria-label="Close view toolbar"><Close /></button>
    </div>
    <div className="flex flex-col pt-[3px] pl-[9px]">
      {viewTools.map((t) => (
        <button
          key={t.name}
          type="button"
          aria-label={t.name}
          className={`flex h-[40px] w-[40px] border pt-[3px] pl-[3px] ${t.active ? "border-[#90c8f6] bg-[#cce4f8]" : "border-transparent"}`}
        >
          <svg width="35" height="35" viewBox="0 0 35 35">
            {t.art}
            <path d="M35 30V35H30Z" fill="#000" />
          </svg>
        </button>
      ))}
    </div>
  </aside>
);

/* ---------- status bars ---------- */

const Down = ({ color = "#555" }) => (
  <svg width="10" height="6" viewBox="0 0 10 6"><path d="M1 1L5 5L9 1" fill="none" stroke={color} strokeWidth="1.200" /></svg>
);

const coordBox = "h-[28px] w-[76px] border border-[#707070] bg-[#f0f0f0] px-[6px] outline outline-1 -outline-offset-3 outline-white";

// the axis letters are strokes of the icon itself
const PlaneIcon = ({ axis }: { axis: "X" | "Y" | "Z" }) => (
  <svg width="20" height="22" viewBox="0 0 20 22" fill="none" strokeWidth="1.500">
    {axis === "X" && (
      <g>
        <path d="M1 4L8 1V13L1 16Z" fill="#66b0e8" />
        <path d="M9 13V2M7 4L9 1L11 4M9 13L2 20" stroke="#1b8fe6" />
        <path d="M9 13L17 19" stroke="#666" />
        <path d="M14 3L19 9M19 3L14 9" stroke="#1b8fe6" strokeWidth="1.200" />
      </g>
    )}
    {axis === "Y" && (
      <g>
        <path d="M11 1L18 4V14L11 11Z" fill="#66b0e8" />
        <path d="M10 2V12L2 18" stroke="#666" />
        <path d="M10 12L18 18" stroke="#1b8fe6" />
        <path d="M7 15L10 18L13 15M10 18V22" stroke="#1b8fe6" strokeWidth="1.200" />
      </g>
    )}
    {axis === "Z" && (
      <g>
        <path d="M10 10L18 15L11 22L4 17Z" fill="#66b0e8" />
        <path d="M11 11V1M9 4L11 1L13 4" stroke="#666" />
        <path d="M11 11L2 16M11 11L19 15" stroke="#1b8fe6" />
        <path d="M1 3H6L1 9H6" stroke="#1b8fe6" strokeWidth="1.200" />
      </g>
    )}
  </svg>
);

const StatusBar = () => (
  <footer className="border-t border-[#c6c6c6] bg-[#f0f0f0] text-sm text-[#111]">
    <div className="flex h-[31px] items-start pt-[5px] pl-[15px] text-[13px]">
      <div className="flex h-[19px] items-center">
        <button type="button" aria-label="Close levels"><Close size={9} w={2} color="#111" /></button>
        <svg width="18" height="14" viewBox="0 0 18 14" className="ml-[18px]" fill="#ccc" stroke="#666">
          <rect x=".5" y=".5" width="13" height="4" />
          <rect x=".5" y="9.500" width="13" height="4" />
          <rect x=".5" y="5" width="5" height="4" />
          <path d="M6 5H17V9H6Z" fill="#1b8fe6" stroke="#1572b8" />
        </svg>
      </div>
      <div className="ml-[7px] flex gap-[2px]">
        {["0", "1", "2", "3", "4"].map((n) => (
          <button key={n} type="button" className="h-[19px] w-[28px] border border-[#90c8f6] bg-[#c1dcf3] leading-[17px]">{n}</button>
        ))}
      </div>
    </div>
    <div className="flex h-[42px] items-center pb-px pl-[6px]">
      <svg width="21" height="20" viewBox="0 0 21 20" fill="none" stroke="#c4c4c4" strokeWidth="1.300">
        <path d="M2 1V18H20M2 18L12 8M0 3L2 0L4 3M17 16L20 18L17 20M8 8H12V12" />
      </svg>
      <div className="relative ml-[4px] flex h-[28px] w-[110px] items-center border border-[#c6c6c6] bg-white p-[2px]">
        <select aria-label="Workplane" disabled className="h-[22px] w-[84px] appearance-none bg-[#f0f0f0] px-1 text-[#777] opacity-100">
          <option>1</option>
        </select>
        <span className="absolute right-[5px]"><Down color="#b5b5b5" /></span>
      </div>
      <div className="relative ml-[5px] flex h-[26px] w-[174px] items-center bg-white">
        <select aria-label="Level" className="h-full w-full appearance-none bg-white pl-[5px] whitespace-pre">
          <option>{"0\u00a0\u00a0 : General"}</option>
        </select>
        <span className="pointer-events-none absolute right-0 flex h-full w-[22px] items-center justify-center border-l border-[#e8e8e8]"><Down /></span>
      </div>
      <div className="ml-[5px] flex items-center">
        <button type="button" aria-label="YZ plane" className="flex w-[25px]"><PlaneIcon axis="X" /></button>
        <button type="button" aria-label="ZX plane" className="flex h-[24px] w-[24px] items-center justify-center border border-[#90c8f6] bg-[#c1dcf3]"><PlaneIcon axis="Y" /></button>
        <button type="button" aria-label="XY plane" className="ml-[4px] flex w-[24px]"><PlaneIcon axis="Z" /></button>
        <button type="button" aria-label="Lock plane" className="ml-[5px]">
          <svg width="17" height="22" viewBox="0 0 17 22" fill="none" stroke="#666" strokeWidth="1.500">
            <rect x="1" y="10" width="14" height="11" fill="#ddd" />
            <path d="M4 10V4Q5 1 8 1Q12 1 12 5" strokeWidth="2" />
            <circle cx="8" cy="14" r="1.500" />
            <path d="M8 15V18" />
          </svg>
        </button>
        <button type="button" aria-label="Intelligent cursor" className="ml-[9px]">
          <svg width="21" height="22" viewBox="0 0 21 22" fill="none">
            <path d="M1 8a6 6 0 1 1 10 3L9 14H4Q4 12 1 8Z" fill="#f6a500" />
            <path d="M4 16H9M5 18H8" stroke="#777" strokeWidth="1.500" />
            <circle cx="12" cy="11" r="5" stroke="#555" />
            <path d="M12 3V19M5 11H20" stroke="#555" />
            <path d="M20 17V22H15Z" fill="#000" />
          </svg>
        </button>
        <button type="button" aria-label="Grid" className="ml-[5px]">
          <svg width="21" height="21" viewBox="0 0 21 21">
            <path d="M2.500 0V21M6.500 0V21M10.500 0V21M14.500 0V21M18.500 0V21M0 2.500H21M0 6.500H21M0 10.500H21M0 14.500H21M0 18.500H21" stroke="#1b8fe6" />
          </svg>
        </button>
      </div>
      <div className="ml-[4px] flex gap-[3px]">
        <input aria-label="Principal" disabled className="h-[28px] w-[64px] border border-[#c6c6c6] bg-[#f0f0f0] outline outline-1 -outline-offset-3 outline-white" />
        <input aria-label="X coordinate" defaultValue="-71.098" className={coordBox} />
        <input aria-label="Y coordinate" defaultValue="0" className={coordBox} />
        <input aria-label="Z coordinate" defaultValue="2.50465" className={coordBox} />
      </div>
      <button type="button" aria-label="Position" className="ml-[6px]">
        <svg width="20" height="20" viewBox="0 0 20 20" fill="none" stroke="#c6c6c6">
          <rect x=".5" y=".5" width="19" height="19" fill="#f4f4f4" />
          <path d="M0 1.500H20" strokeWidth="2" />
          <path d="M3 5L6 8M6 5L3 8M3 10L4.500 12L6 10M4.500 12V13M3 15H6L3 18H6M8 6.500H18M8 11.500H18M8 16.500H18" />
        </svg>
      </button>
      <button type="button" aria-label="Calculator" className="ml-[10px]">
        <svg width="15" height="20" viewBox="0 0 15 20">
          <rect x=".5" y=".5" width="14" height="19" fill="#e8e8e8" stroke="#555" />
          <rect x="2" y="2" width="11" height="5" fill="#aaa" />
          <rect x="9" y="3" width="3" height="3" fill="#444" />
          <path d="M3 9.500H12M3 13H12M3 16.500H12" stroke="#777" strokeWidth="2" strokeDasharray="2 1.500" />
        </svg>
      </button>
      <svg width="10" height="20" viewBox="0 0 10 20" className="ml-[14px]" fill="#ececec" stroke="#c6c6c6">
        <path d="M10 .5H.5V19.500H10M5 4H10M7 7H10M5 10H10M7 13H10M5 16H10" />
      </svg>
      <label htmlFor="tol" className="ml-[13px] w-[24px] text-[#aaa]">Tol</label>
      <input id="tol" disabled defaultValue="0.01" className="h-[28px] w-[58px] border border-[#c6c6c6] bg-[#f0f0f0] px-[6px] text-[#888] outline outline-1 -outline-offset-3 outline-white" />
      <input aria-label="Command" placeholder="Type Command" className="ml-[4px] h-[26px] w-[218px] bg-white px-[6px] placeholder:text-[#777]" />
    </div>
    <div className="flex h-[2px] bg-black">
      <span className="ml-[60px] w-[430px] bg-[#333]" />
    </div>
  </footer>
);

export default function App() {
  return (
    <div className={`relative flex h-screen flex-col overflow-hidden bg-[#f0f0f0] ${FONT}`}>
      <TitleBar />
      <TabRow />
      <Ribbon />
      <main className="relative flex min-h-0 flex-1">
        <Explorer />
        <div className="relative min-w-0 flex-1 overflow-hidden bg-linear-to-b from-white to-[#666]">
          <Model />
        </div>
        <ViewBar />
        <ReplaceFaces />
      </main>
      <StatusBar />
      <div className="pointer-events-none absolute top-[25px] left-[1049px] h-[56px] w-[134px] border-[5px] border-[#ed1c24]" />
    </div>
  );
}
